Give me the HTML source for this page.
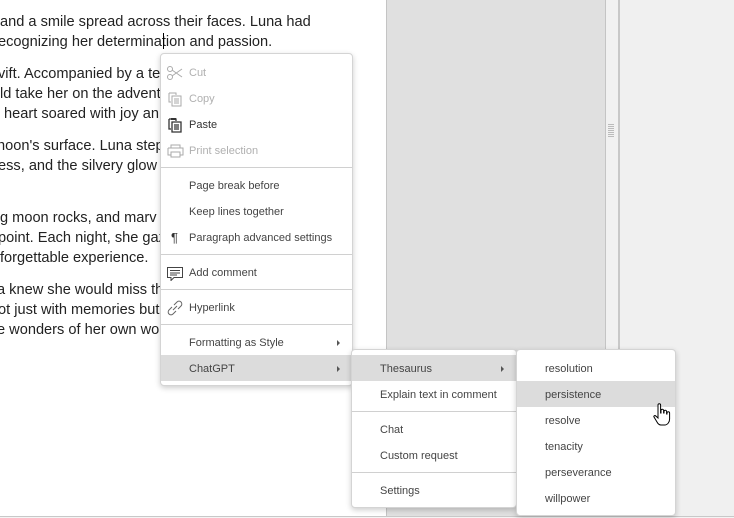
<!DOCTYPE html>
<html><head><meta charset="utf-8"><style>
*{margin:0;padding:0;box-sizing:border-box}
body{width:734px;height:518px;overflow:hidden;background:#fff;position:relative;font-family:"Liberation Sans",Arial,sans-serif}
.ln{position:absolute;left:0;font-size:14.6px;color:#222;white-space:nowrap;line-height:20px}
.g1{position:absolute;left:386px;top:0;width:220px;height:516px;background:#e0e0e0;border-left:1px solid #c4c4c4;border-right:1px solid #c4c4c4}
.g2{position:absolute;left:606px;top:0;width:12px;height:516px;background:#f1f1f1}
.g3{position:absolute;left:618px;top:0;width:116px;height:516px;background:#f0f0f0;border-left:2px solid #c8c8c8}
.bot{position:absolute;left:0;top:516px;width:734px;height:2px;background:#f4f4f4;border-top:1px solid #c8c8c8}
.menu{position:absolute;background:#fff;border:1px solid #d4d4d4;border-radius:4px;box-shadow:0 2px 6px rgba(0,0,0,.2)}
.it{position:absolute;left:0;right:0;height:26px;line-height:28px;font-size:11px;color:#444;white-space:nowrap}
.dis{color:#b0b0b0}
.hl{background:#dcdcdc}
.sep{position:absolute;left:0;right:0;height:1px;background:#d0d0d0}
.ar{position:absolute;right:12px;top:11px;width:0;height:0;border-left:3px solid #555;border-top:3px solid transparent;border-bottom:3px solid transparent}
.ic{position:absolute;left:5px;top:6px}
</style></head><body>
<div class="ln" style="top:12px;left:0">and a smile spread across their faces. Luna had</div>
<div class="ln" style="top:32px;left:-2px">ecognizing her determination and passion.</div>
<div style="position:absolute;left:163px;top:33px;width:1px;height:16px;background:#000"></div>
<div class="ln" style="top:64px;left:-2px">vift. Accompanied by a te</div>
<div class="ln" style="top:84px;left:0">ld take her on the advent</div>
<div class="ln" style="top:104px;left:0">&nbsp;heart soared with joy an</div>
<div class="ln" style="top:136px;left:-3px">noon's surface. Luna step</div>
<div class="ln" style="top:156px;left:-2px">ess, and the silvery glow</div>
<div class="ln" style="top:208px;left:0">g moon rocks, and marv</div>
<div class="ln" style="top:228px;left:-2px">point. Each night, she gaz</div>
<div class="ln" style="top:248px;left:0">forgettable experience.</div>
<div class="ln" style="top:280px;left:-3px">a knew she would miss th</div>
<div class="ln" style="top:300px;left:-2px">ot just with memories but</div>
<div class="ln" style="top:320px;left:-3px">e wonders of her own wor</div>

<div class="g1"></div>
<div class="g2"><div style="position:absolute;left:2px;top:124px;width:6px;height:13px;background:repeating-linear-gradient(#bbb 0 1px,transparent 1px 2px)"></div></div>
<div class="g3"></div>
<div class="bot"></div>

<div class="menu" style="left:160px;top:53px;width:193px;height:333px">
 <div class="it dis" style="top:5px"><svg class="ic" width="18" height="16" viewBox="0 0 18 16"><circle cx="4" cy="4" r="2.5" fill="none" stroke="#aaa"/><circle cx="4" cy="12" r="2.5" fill="none" stroke="#aaa"/><path d="M6 5L16 12M6 11L16 4" stroke="#aaa" fill="none"/></svg><span style="position:absolute;left:28px">Cut</span></div>
 <div class="it dis" style="top:31px"><svg class="ic" width="18" height="16" viewBox="0 0 18 16"><path d="M3 2h7v2M3 2v9h2M6 5h9v10H6z M8 8h5M8 10h5M8 12h5" stroke="#aaa" fill="none"/></svg><span style="position:absolute;left:28px">Copy</span></div>
 <div class="it" style="top:57px;color:#333"><svg class="ic" width="18" height="16" viewBox="0 0 18 16"><path d="M3 2h7v2M3 2v10h2M6 5h9v10H6z M8 8h5M8 10h5M8 12h5" stroke="#333" stroke-width="1.3" fill="none"/><rect x="5" y="1" width="5" height="2" fill="#333"/></svg><span style="position:absolute;left:28px">Paste</span></div>
 <div class="it dis" style="top:83px"><svg class="ic" width="18" height="16" viewBox="0 0 18 16"><path d="M5 5V2h9v3M2 5h15v7H14M5 12H2V5M5 9h9v5H5z" stroke="#aaa" fill="none"/></svg><span style="position:absolute;left:28px">Print selection</span></div>
 <div class="sep" style="top:113px"></div>
 <div class="it" style="top:118px"><span style="position:absolute;left:28px">Page break before</span></div>
 <div class="it" style="top:144px"><span style="position:absolute;left:28px">Keep lines together</span></div>
 <div class="it" style="top:170px"><span style="position:absolute;left:10px;font-size:13px;color:#333">¶</span><span style="position:absolute;left:28px">Paragraph advanced settings</span></div>
 <div class="sep" style="top:200px"></div>
 <div class="it" style="top:205px"><svg class="ic" width="18" height="16" viewBox="0 0 18 16"><path d="M1.5 2.5h15v10H8l-3 3v-3H1.5z M4 5.5h10M4 8h10M4 10h7" stroke="#444" fill="none"/></svg><span style="position:absolute;left:28px">Add comment</span></div>
 <div class="sep" style="top:235px"></div>
 <div class="it" style="top:240px"><svg class="ic" width="18" height="16" viewBox="0 0 18 16"><path d="M8 5l3-3a2.5 2.5 0 0 1 4 4l-3 3M10 11l-3 3a2.5 2.5 0 0 1-4-4l3-3M7 10l4-4" stroke="#666" fill="none"/></svg><span style="position:absolute;left:28px">Hyperlink</span></div>
 <div class="sep" style="top:270px"></div>
 <div class="it" style="top:275px"><span style="position:absolute;left:28px">Formatting as Style</span><i class="ar"></i></div>
 <div class="it hl" style="top:301px"><span style="position:absolute;left:28px">ChatGPT</span><i class="ar"></i></div>
</div>

<div class="menu" style="left:351px;top:349px;width:166px;height:159px">
 <div class="it hl" style="top:5px"><span style="position:absolute;left:28px">Thesaurus</span><i class="ar"></i></div>
 <div class="it" style="top:31px"><span style="position:absolute;left:28px">Explain text in comment</span></div>
 <div class="sep" style="top:61px"></div>
 <div class="it" style="top:66px"><span style="position:absolute;left:28px">Chat</span></div>
 <div class="it" style="top:92px"><span style="position:absolute;left:28px">Custom request</span></div>
 <div class="sep" style="top:122px"></div>
 <div class="it" style="top:127px"><span style="position:absolute;left:28px">Settings</span></div>
</div>

<div class="menu" style="left:516px;top:349px;width:160px;height:167px">
 <div class="it" style="top:5px"><span style="position:absolute;left:28px">resolution</span></div>
 <div class="it hl" style="top:31px"><span style="position:absolute;left:28px">persistence</span></div>
 <div class="it" style="top:57px"><span style="position:absolute;left:28px">resolve</span></div>
 <div class="it" style="top:83px"><span style="position:absolute;left:28px">tenacity</span></div>
 <div class="it" style="top:109px"><span style="position:absolute;left:28px">perseverance</span></div>
 <div class="it" style="top:135px"><span style="position:absolute;left:28px">willpower</span></div>
</div>

<svg style="position:absolute;left:652px;top:403px" width="20" height="24" viewBox="0 0 20 24"><path d="M6 2a1.3 1.3 0 0 1 2.6 0v8h0.4V7.5a1.3 1.3 0 0 1 2.6 0V10h.4V8.5a1.3 1.3 0 0 1 2.6 0V11h.4V10a1.3 1.3 0 0 1 2.6 0v6c0 3-2 6-5 6H9c-2 0-3-1-4-3l-3-5c-.6-1 .8-2 1.8-1L6 15z" fill="#fff" stroke="#000" stroke-width="1"/></svg>
</body></html>
